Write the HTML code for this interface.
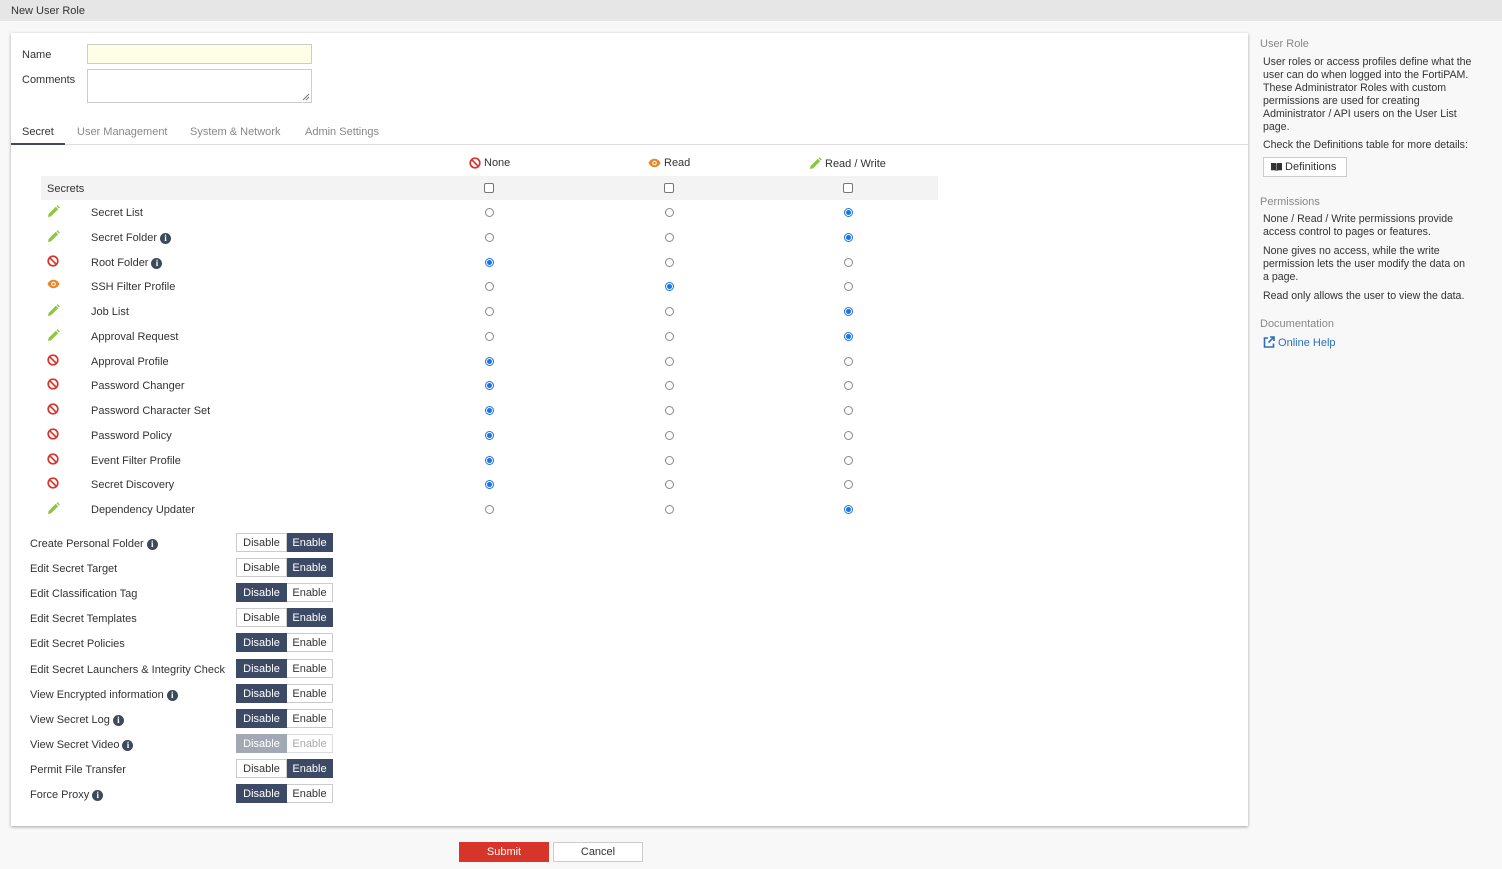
<!DOCTYPE html>
<html><head><meta charset="utf-8">
<style>
*{box-sizing:border-box;margin:0;padding:0}
body{width:1502px;height:869px;background:#f8f8f8;font-family:"Liberation Sans",sans-serif;font-size:11px;color:#333;position:relative;overflow:hidden}
.abs{position:absolute}
.hdr{left:0;top:0;width:1502px;height:21px;background:#e6e6e6;padding:5px 11px;font-size:11px}
.card{left:11px;top:33px;width:1237px;height:793px;background:#fff;box-shadow:0 1px 3px rgba(0,0,0,.35)}
.t{position:absolute;white-space:nowrap}
.inp{position:absolute;border:1px solid #ccc}
.tab{position:absolute;top:126px;color:#888}
.rad{position:absolute;width:9px;height:9px;border:1px solid #888;border-radius:50%;background:#fff}
.rad.on{border:1px solid #1a73e8;background:radial-gradient(circle,#1a73e8 0 2.2px,#fff 2.8px)}
.cb{position:absolute;width:10px;height:10px;border:1px solid #777;border-radius:2px;background:#fff}
.info{display:inline-block;width:11px;height:11px;border-radius:50%;background:#3d4a5c;color:#fff;font-size:9px;font-weight:bold;text-align:center;line-height:11px;vertical-align:0px;margin-left:3px;font-family:"Liberation Serif",serif}
.tg{position:absolute;left:236px;height:19px;display:flex}
.tg span{display:block;height:19px;line-height:18px;border:1px solid #ccc;text-align:center;background:#fff;color:#333}
.tg .d{width:51px}.tg .e{width:46px;border-left:none}
.tg .on{background:#3d4a66;color:#fff;border-color:#3d4a66}
.sp{color:#333;font-size:10.6px;line-height:13px}
</style></head><body>
<div class="abs hdr">New User Role</div>
<div class="abs card"></div>
<div class="t" style="left:22px;top:49px">Name</div>
<div class="t" style="left:22px;top:74px">Comments</div>
<div class="inp" style="left:87px;top:44px;width:225px;height:20px;background:#fefee6"></div>
<div class="inp" style="left:87px;top:69px;width:225px;height:34px;background:#fff"></div>
<svg class="abs" style="left:302px;top:93px" width="8" height="8"><path d="M1 7L7 1M4 7L7 4" stroke="#777" stroke-width="1"/></svg>
<div class="tab" style="left:22px;color:#333">Secret</div>
<div class="tab" style="left:77px">User Management</div>
<div class="tab" style="left:190px">System &amp; Network</div>
<div class="tab" style="left:305px">Admin Settings</div>
<div class="abs" style="left:11px;top:144px;width:1237px;height:1px;background:#ddd"></div>
<div class="abs" style="left:11px;top:143px;width:54px;height:2px;background:#3d4a66"></div>
<div class="abs" style="left:41px;top:176px;width:897px;height:24px;background:#f3f3f3"></div>
<div class="t" style="left:47px;top:183px">Secrets</div>
<div id="g"></div>
<div class="t" style="left:1260px;top:38px;color:#888">User Role</div>
<div class="t sp" style="left:1263px;top:56px">User roles or access profiles define what the<br>user can do when logged into the FortiPAM.<br>These Administrator Roles with custom<br>permissions are used for creating<br>Administrator / API users on the User List<br>page.</div>
<div class="t sp" style="left:1263px;top:139px">Check the Definitions table for more details:</div>
<div class="abs" style="left:1263px;top:157px;width:84px;height:20px;border:1px solid #ccc;background:#fff;padding:3px 0 0 7px"><svg width="11" height="9" viewBox="0 0 11 9" style="vertical-align:-1px"><path d="M0 1h4.5c.5 0 .8.4.8.8V9C4.8 8.5 4 8.2 3 8.2H0z M11 1H6.5c-.5 0-.8.4-.8.8V9c.5-.5 1.3-.8 2.3-.8H11z" fill="#333"/></svg> Definitions</div>
<div class="t" style="left:1260px;top:196px;color:#888">Permissions</div>
<div class="t sp" style="left:1263px;top:213px">None / Read / Write permissions provide<br>access control to pages or features.</div>
<div class="t sp" style="left:1263px;top:245px">None gives no access, while the write<br>permission lets the user modify the data on<br>a page.</div>
<div class="t sp" style="left:1263px;top:290px">Read only allows the user to view the data.</div>
<div class="t" style="left:1260px;top:318px;color:#888">Documentation</div>
<div class="t" style="left:1263px;top:336px;color:#2a6fb8"><svg width="12" height="12" viewBox="0 0 12 12" style="vertical-align:-2px"><path d="M5 2H1.5v9h9V7.5" fill="none" stroke="#2a6fb8" stroke-width="1.6"/><path d="M7 1h4v4M11 1L5.5 6.5" fill="none" stroke="#2a6fb8" stroke-width="1.6"/></svg> Online Help</div>
<div class="abs" style="left:459px;top:842px;width:90px;height:20px;background:#d8352a;color:#fff;text-align:center;line-height:21px">Submit</div>
<div class="abs" style="left:553px;top:842px;width:90px;height:20px;background:#fff;border:1px solid #ccc;text-align:center;line-height:19px">Cancel</div>
<script>
const P='<svg width="13" height="13" viewBox="0 0 13 13"><path d="M1 12l.6-3L8.8 1.8l2.4 2.4L4 11.4z" fill="#8dc63f"/><path d="M9.5 1.1l1-1 2.4 2.4-1 1z" fill="#8dc63f"/></svg>';
const B='<svg width="12" height="12" viewBox="0 0 12 12"><circle cx="6" cy="6" r="4.8" fill="none" stroke="#d9342b" stroke-width="1.7"/><path d="M2.7 2.7l6.6 6.6" stroke="#d9342b" stroke-width="1.7"/></svg>';
const E='<svg width="13" height="10" viewBox="0 0 13 10"><path d="M.5 5C2 2 4.3.8 6.5.8S11 2 12.5 5C11 8 8.7 9.2 6.5 9.2S2 8 .5 5z" fill="#e8872a"/><circle cx="6.5" cy="5" r="2.3" fill="#fff"/><circle cx="6.5" cy="5" r="1.3" fill="#e8872a"/></svg>';
const I='<span class="info">i</span>';
let h='';
h+=`<div class="t" style="left:469px;top:157px;display:flex;align-items:center;gap:3px">${B}<span>None</span></div>`;
h+=`<div class="t" style="left:648px;top:157px;display:flex;align-items:center;gap:3px">${E}<span>Read</span></div>`;
h+=`<div class="t" style="left:809px;top:157px;display:flex;align-items:center;gap:3px">${P}<span>Read / Write</span></div>`;
[489,669,848].forEach(x=>h+=`<div class="cb" style="left:${x-5}px;top:183px"></div>`);
const rows=[['Secret List',2,0],['Secret Folder',2,1],['Root Folder',0,1],['SSH Filter Profile',1,0],['Job List',2,0],['Approval Request',2,0],['Approval Profile',0,0],['Password Changer',0,0],['Password Character Set',0,0],['Password Policy',0,0],['Event Filter Profile',0,0],['Secret Discovery',0,0],['Dependency Updater',2,0]];
rows.forEach((r,i)=>{const y=212+i*24.75;const ic=[B,E,P][r[1]];
h+=`<div class="t" style="left:47px;top:${y-7}px">${ic}</div>`;
h+=`<div class="t" style="left:91px;top:${y-5}px">${r[0]}${r[2]?I:''}</div>`;
[489,669,848].forEach((x,k)=>h+=`<div class="rad${k==r[1]?' on':''}" style="left:${x-4}px;top:${y-4}px"></div>`);});
const tg=[['Create Personal Folder',1,1],['Edit Secret Target',1,0],['Edit Classification Tag',0,0],['Edit Secret Templates',1,0],['Edit Secret Policies',0,0],['Edit Secret Launchers &amp; Integrity Check',0,0],['View Encrypted information',0,1],['View Secret Log',0,1],['View Secret Video',2,1],['Permit File Transfer',1,0],['Force Proxy',0,1]];
tg.forEach((r,i)=>{const y=543+i*25.1;
h+=`<div class="t" style="left:30px;top:${y-5}px">${r[0]}${r[2]?I:''}</div>`;
let d,e;if(r[1]==2){d='<span class="d" style="background:#a3a9b4;color:#fff;border-color:#a3a9b4">Disable</span>';e='<span class="e" style="color:#aaa;border-color:#ddd">Enable</span>';}
else{d=`<span class="d${r[1]==0?' on':''}">Disable</span>`;e=`<span class="e${r[1]==1?' on':''}">Enable</span>`;}
h+=`<div class="tg" style="top:${y-10}px">${d}${e}</div>`;});
document.getElementById('g').innerHTML=h;
</script>
</body></html>
